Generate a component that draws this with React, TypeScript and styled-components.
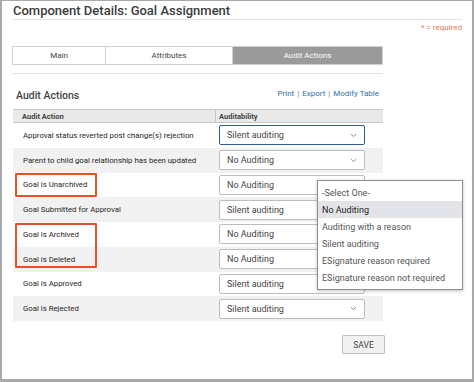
import React from "react";
import styled, { createGlobalStyle } from "styled-components";

const Global = createGlobalStyle`
  html, body { margin: 0; padding: 0; background: #fff; }
  body { font-family: Roboto, "Liberation Sans", Arial, sans-serif; }
  * { box-sizing: border-box; }
`;

const Frame = styled.div`
  position: relative;
  width: 474px;
  height: 382px;
  border-style: solid;
  border-color: #a9a9a9;
  border-width: 1px 2px 3px 2px;
  padding: 2px 10px 0 10px;
  background: #fff;
  overflow: hidden;
`;

const Title = styled.h1`
  margin: 0;
  padding: 0 0 0 1px;
  height: 17px;
  font-size: 13px;
  line-height: 16px;
  font-weight: 500;
  color: #3b3b3b;
  border-bottom: 1px solid #e2e2e2;
`;

const Required = styled.div`
  margin-top: 3px;
  text-align: right;
  font-size: 8px;
  line-height: 10px;
  color: #e9764f;
`;

const Tabs = styled.div`
  margin-top: 13px;
  width: 371px;
  height: 19px;
  display: flex;
  border: 1px solid #d2d2d2;
`;

const Tab = styled.div<{ $w: number; $active?: boolean; $first?: boolean }>`
  width: ${(p) => p.$w}px;
  display: flex;
  align-items: center;
  justify-content: center;
  font-size: 8px;
  color: ${(p) => (p.$active ? "#fff" : "#444")};
  background: ${(p) => (p.$active ? "#9a9a9a" : "#fff")};
  border-left: ${(p) => (p.$first ? "none" : "1px solid #d2d2d2")};
`;

const Divider = styled.div`
  margin-top: 8px;
  width: 371px;
  height: 1px;
  background: #e2e2e2;
`;

const SectionHead = styled.div`
  margin-top: 15px;
  width: 371px;
  height: 14px;
  display: flex;
  justify-content: space-between;
  align-items: center;
  padding: 0 4px;
`;

const Heading = styled.h2`
  margin: 0;
  font-size: 10.5px;
  line-height: 14px;
  font-weight: 500;
  color: #444;
`;

const Links = styled.div`
  font-size: 8px;
  line-height: 10px;
  color: #2b74a8;
  margin-bottom: 4px;
  display: flex;
  gap: 3px;
`;

const Sep = styled.span`
  color: #777;
`;

const Table = styled.div`
  margin-top: 6px;
  margin-left: 1px;
  width: 370px;
`;

const HeadRow = styled.div`
  display: grid;
  grid-template-columns: 202px 1fr;
  height: 14px;
  background: #e9e9e9;
  border-top: 1px solid #c6c6c6;
  border-bottom: 1px solid #c6c6c6;
`;

const HeadCell = styled.div<{ $divider?: boolean }>`
  display: flex;
  align-items: center;
  padding-left: ${(p) => (p.$divider ? "3px" : "9px")};
  font-size: 7.5px;
  font-weight: 700;
  color: #444;
  border-left: ${(p) => (p.$divider ? "1px solid #c6c6c6" : "none")};
`;

const Row = styled.div<{ $alt: boolean }>`
  display: grid;
  grid-template-columns: 202px 1fr;
  height: 24.75px;
  background: ${(p) => (p.$alt ? "#f1f1f1" : "#fff")};
`;

const Cell = styled.div`
  display: flex;
  align-items: center;
  padding-left: 10px;
  font-size: 7.8px;
  color: #262626;
  white-space: nowrap;
`;

const SelectCell = styled.div`
  display: flex;
  align-items: center;
  padding-left: 4px;
`;

const Select = styled.div<{ $focus?: boolean }>`
  width: 146px;
  height: 20px;
  display: flex;
  align-items: center;
  justify-content: space-between;
  padding: 0 7px 0 7px;
  background: #fff;
  border: ${(p) => (p.$focus ? "1.5px solid #2f5b8c" : "1px solid #bdbdbd")};
  border-radius: 2px;
  font-size: 9px;
  color: #444;
`;

const Chevron = () => (
  <svg width="7" height="5" viewBox="0 0 7 5">
    <path d="M1 1.2 L3.5 3.6 L6 1.2" fill="none" stroke="#8a8a8a" strokeWidth="1" />
  </svg>
);

const Footer = styled.div`
  margin-top: 14px;
  width: 373px;
  display: flex;
  justify-content: flex-end;
`;

const SaveButton = styled.button`
  width: 43px;
  height: 19px;
  padding: 0;
  background: #f1f1f1;
  border: 1px solid #bfbfbf;
  border-radius: 1px;
  font-family: inherit;
  font-size: 8.5px;
  color: #444;
`;

const Highlight = styled.div<{ $left: number; $top: number; $w: number; $h: number }>`
  position: absolute;
  left: ${(p) => p.$left}px;
  top: ${(p) => p.$top}px;
  width: ${(p) => p.$w}px;
  height: ${(p) => p.$h}px;
  border: 2px solid #e4532c;
  border-radius: 1px;
  pointer-events: none;
`;

const Menu = styled.div`
  position: absolute;
  left: 315px;
  top: 179px;
  width: 146px;
  padding: 3px 0;
  background: #fff;
  border: 1.5px solid #8e8e8e;
  box-shadow: 0 1px 3px rgba(0, 0, 0, 0.25);
`;

const MenuItem = styled.div<{ $active?: boolean }>`
  height: 17px;
  display: flex;
  align-items: center;
  padding-left: 4px;
  font-size: 9px;
  white-space: nowrap;
  color: ${(p) => (p.$active ? "#222" : "#555")};
  background: ${(p) => (p.$active ? "#e3e3ea" : "transparent")};
`;

const rows: { label: string; value: string; focus?: boolean }[] = [
  { label: "Approval status reverted post change(s) rejection", value: "Silent auditing", focus: true },
  { label: "Parent to child goal relationship has been updated", value: "No Auditing" },
  { label: "Goal is Unarchived", value: "No Auditing" },
  { label: "Goal Submitted for Approval", value: "Silent auditing" },
  { label: "Goal is Archived", value: "No Auditing" },
  { label: "Goal is Deleted", value: "No Auditing" },
  { label: "Goal is Approved", value: "Silent auditing" },
  { label: "Goal is Rejected", value: "Silent auditing" },
];

const options = [
  "-Select One-",
  "No Auditing",
  "Auditing with a reason",
  "Silent auditing",
  "ESignature reason required",
  "ESignature reason not required",
];

export default function App() {
  return (
    <>
      <Global />
      <Frame>
        <Title>Component Details: Goal Assignment</Title>
        <Required>* = required</Required>
        <Tabs>
          <Tab $w={92} $first>Main</Tab>
          <Tab $w={127}>Attributes</Tab>
          <Tab $w={150} $active>Audit Actions</Tab>
        </Tabs>
        <Divider />
        <SectionHead>
          <Heading>Audit Actions</Heading>
          <Links>
            <span>Print</span>
            <Sep>|</Sep>
            <span>Export</span>
            <Sep>|</Sep>
            <span>Modify Table</span>
          </Links>
        </SectionHead>
        <Table>
          <HeadRow>
            <HeadCell>Audit Action</HeadCell>
            <HeadCell $divider>Auditability</HeadCell>
          </HeadRow>
          {rows.map((r, i) => (
            <Row key={r.label} $alt={i % 2 === 1}>
              <Cell>{r.label}</Cell>
              <SelectCell>
                <Select $focus={r.focus}>
                  <span>{r.value}</span>
                  <Chevron />
                </Select>
              </SelectCell>
            </Row>
          ))}
        </Table>
        <Footer>
          <SaveButton>SAVE</SaveButton>
        </Footer>
        <Highlight $left={13} $top={172} $w={82} $h={24} />
        <Highlight $left={13} $top={222} $w={82} $h={45} />
        <Menu>
          {options.map((o) => (
            <MenuItem key={o} $active={o === "No Auditing"}>
              {o}
            </MenuItem>
          ))}
        </Menu>
      </Frame>
    </>
  );
}
